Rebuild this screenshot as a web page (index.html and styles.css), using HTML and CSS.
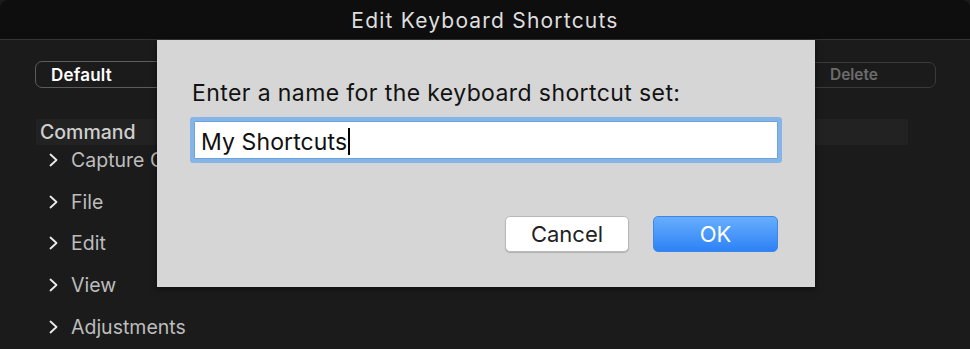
FILE: index.html
```html
<!DOCTYPE html>
<html>
<head>
<meta charset="utf-8">
<link rel="stylesheet" href="styles.css">
</head>
<body>
<div class="window">
  <div class="titlebar">Edit Keyboard Shortcuts</div>
  <div class="content">
    <div class="toolbar">
      <div class="btn-default">Default</div>
      <div class="btn-delete">Delete</div>
    </div>
    <div class="table-head">Command</div>
    <ul class="tree">
      <li class="tree-item"><svg class="chev" width="9" height="14" viewBox="0 0 9 14"><polyline points="1.5,1.5 7.5,7 1.5,12.5" fill="none" stroke="#ececec" stroke-width="1.8" stroke-linecap="round" stroke-linejoin="round"/></svg><span>Capture One</span></li>
      <li class="tree-item"><svg class="chev" width="9" height="14" viewBox="0 0 9 14"><polyline points="1.5,1.5 7.5,7 1.5,12.5" fill="none" stroke="#ececec" stroke-width="1.8" stroke-linecap="round" stroke-linejoin="round"/></svg><span>File</span></li>
      <li class="tree-item"><svg class="chev" width="9" height="14" viewBox="0 0 9 14"><polyline points="1.5,1.5 7.5,7 1.5,12.5" fill="none" stroke="#ececec" stroke-width="1.8" stroke-linecap="round" stroke-linejoin="round"/></svg><span>Edit</span></li>
      <li class="tree-item"><svg class="chev" width="9" height="14" viewBox="0 0 9 14"><polyline points="1.5,1.5 7.5,7 1.5,12.5" fill="none" stroke="#ececec" stroke-width="1.8" stroke-linecap="round" stroke-linejoin="round"/></svg><span>View</span></li>
      <li class="tree-item"><svg class="chev" width="9" height="14" viewBox="0 0 9 14"><polyline points="1.5,1.5 7.5,7 1.5,12.5" fill="none" stroke="#ececec" stroke-width="1.8" stroke-linecap="round" stroke-linejoin="round"/></svg><span>Adjustments</span></li>
    </ul>
  </div>

  <div class="sheet">
    <div class="sheet-label">Enter a name for the keyboard shortcut set:</div>
    <div class="field"><span class="field-text">My Shortcuts</span><span class="caret"></span></div>
    <div class="sheet-buttons">
      <div class="btn btn-cancel">Cancel</div>
      <div class="btn btn-ok">OK</div>
    </div>
  </div>
</div>
</body>
</html>
```

FILE: styles.css
```css
html, body {
  margin: 0;
  padding: 0;
}
body {
  background: #1a1a1a;
  font-family: Inter, "Liberation Sans", sans-serif;
  width: 970px;
  height: 349px;
  overflow: hidden;
}
.window {
  position: relative;
  width: 970px;
  height: 349px;
  background: #1b1b1b;
}
.titlebar {
  height: 39px;
  background: #0e0e0e;
  border-bottom: 1px solid #353535;
  border-radius: 8px 8px 0 0;
  display: flex;
  align-items: center;
  justify-content: center;
  color: #dedede;
  font-size: 21px;
  letter-spacing: 1.2px;
  padding-top: 1px;
  box-sizing: border-box;
  height: 40px;
}
.content {
  padding: 21px 34px 0 35px;
}
.toolbar {
  display: flex;
  justify-content: space-between;
  align-items: center;
  height: 27px;
}
.btn-default {
  width: 250px;
  border: 1px solid #5c5c5c;
  border-radius: 7px;
  box-sizing: border-box;
  height: 27px;
  padding-left: 15px;
  display: flex;
  align-items: center;
  color: #ffffff;
  font-weight: 600;
  font-size: 17px;
  letter-spacing: 0.2px;
}
.btn-delete {
  width: 164px;
  height: 26px;
  box-sizing: border-box;
  border: 1px solid #3a3a3a;
  border-radius: 7px;
  display: flex;
  align-items: center;
  justify-content: center;
  color: #6c6c6c;
  font-weight: 600;
  font-size: 15.5px;
}
.table-head {
  margin-top: 31px;
  margin-left: 1px;
  margin-right: 28px;
  height: 26px;
  background: #222222;
  padding-left: 4px;
  display: flex;
  align-items: center;
  color: #cfcfcf;
  font-size: 19.5px;
  font-weight: 500;
}
.tree {
  list-style: none;
  margin: 0;
  padding: 1px 0 0;
}
.tree-item {
  height: 41.7px;
  display: flex;
  align-items: flex-start;
  padding-left: 14px;
}
.tree-item span {
  line-height: 28px;
  height: 28px;
  color: #bdbdbd;
  font-size: 19.5px;
  margin-left: 13px;
}
.chev {
  margin-top: 7px;
  flex: none;
}
.sheet {
  position: absolute;
  left: 157px;
  top: 40px;
  width: 658px;
  height: 247px;
  box-sizing: border-box;
  background: #d6d6d6;
  padding: 39px 37px 35px 35px;
  display: flex;
  flex-direction: column;
  box-shadow: 0 2px 6px rgba(0,0,0,0.5);
}
.sheet-label {
  font-size: 23px;
  line-height: 28px;
  color: #121212;
  letter-spacing: 0.4px;
}
.field {
  margin-top: 14px;
  margin-left: 2px;
  height: 38px;
  box-sizing: border-box;
  background: #ffffff;
  border: 1px solid #6ea3dc;
  box-shadow: 0 0 0 4px #85b4e6;
  border-radius: 1px;
  display: flex;
  align-items: center;
  padding-left: 6px;
  padding-top: 4px;
}
.field-text {
  font-size: 23px;
  color: #111;
  letter-spacing: 0.1px;
}
.caret {
  width: 1.5px;
  height: 27px;
  background: #000;
  margin-left: 1px;
  margin-top: -2px;
}
.sheet-buttons {
  margin-top: auto;
  display: flex;
  justify-content: flex-end;
  gap: 24px;
}
.btn {
  width: 124px;
  height: 36px;
  box-sizing: border-box;
  border-radius: 5px;
  display: flex;
  align-items: center;
  justify-content: center;
  font-size: 22px;
}
.btn-cancel {
  background: #ffffff;
  border: 1px solid #b9b9b9;
  box-shadow: 0 1px 1px rgba(0,0,0,0.18);
  color: #222;
}
.btn-ok {
  width: 125px;
  background: linear-gradient(#66aefc, #2e82f7);
  border: 1px solid #3d87e6;
  color: #fff;
}
```
